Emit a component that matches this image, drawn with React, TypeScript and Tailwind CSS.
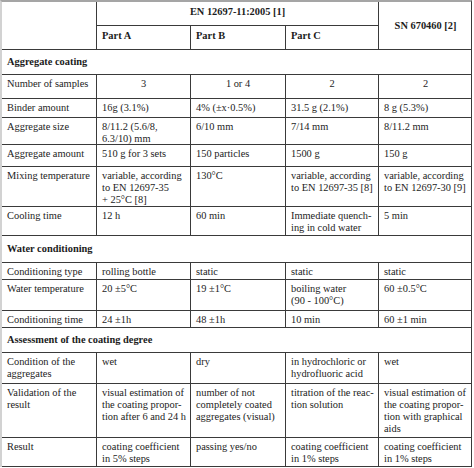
type Row = { label: string[]; cells: string[][]; center?: boolean }

const top: Row[] = [
  { label: ["Number of samples"], cells: [["3"], ["1 or 4"], ["2"], ["2"]], center: true },
  { label: ["Binder amount"], cells: [["16g (3.1%)"], ["4% (±x·0.5%)"], ["31.5 g (2.1%)"], ["8 g (5.3%)"]] },
  { label: ["Aggregate size"], cells: [["8/11.2 (5.6/8,", "6.3/10) mm"], ["6/10 mm"], ["7/14 mm"], ["8/11.2 mm"]] },
  { label: ["Aggregate amount"], cells: [["510 g for 3 sets"], ["150 particles"], ["1500 g"], ["150 g"]] },
  {
    label: ["Mixing temperature"],
    cells: [
      ["variable, according", "to EN 12697-35", "+ 25°C [8]"],
      ["130°C"],
      ["variable, according", "to EN 12697-35 [8]"],
      ["variable, according", "to EN 12697-30 [9]"],
    ],
  },
  { label: ["Cooling time"], cells: [["12 h"], ["60 min"], ["Immediate quench-", "ing in cold water"], ["5 min"]] },
]

const water: Row[] = [
  { label: ["Conditioning type"], cells: [["rolling bottle"], ["static"], ["static"], ["static"]] },
  { label: ["Water temperature"], cells: [["20 ±5°C"], ["19 ±1°C"], ["boiling water", "(90 - 100°C)"], ["60 ±0.5°C"]] },
  { label: ["Conditioning time"], cells: [["24 ±1h"], ["48 ±1h"], ["10 min"], ["60 ±1 min"]] },
]

const assess: Row[] = [
  {
    label: ["Condition of the", "aggregates"],
    cells: [["wet"], ["dry"], ["in hydrochloric or", "hydrofluoric acid"], ["wet"]],
  },
  {
    label: ["Validation of the", "result"],
    cells: [
      ["visual estimation of", "the coating propor-", "tion after 6 and 24 h"],
      ["number of not", "completely coated", "aggregates (visual)"],
      ["titration of the reac-", "tion solution"],
      ["visual estimation of", "the coating propor-", "tion with graphical", "aids"],
    ],
  },
  {
    label: ["Result"],
    cells: [
      ["coating coefficient", "in 5% steps"],
      ["passing yes/no"],
      ["coating coefficient", "in 1% steps"],
      ["coating coefficient", "in 1% steps"],
    ],
  },
]

function Lines({ lines }: { lines: string[] }) {
  return (
    <>
      {lines.map((l, i) => (
        <span key={i} className="block whitespace-nowrap">
          {l}
        </span>
      ))}
    </>
  )
}

function Section({ title }: { title: string }) {
  return (
    <div className="col-span-5 flex items-center border-b border-[#3a3a3a] px-[5px] font-bold">
      {title}
    </div>
  )
}

function Rows({ rows }: { rows: Row[] }) {
  return (
    <>
      {rows.map((r, i) => (
        <div key={i} className="contents">
          <div className="border-r border-b border-[#3a3a3a] px-[5px] pt-[3px]">
            <Lines lines={r.label} />
          </div>
          {r.cells.map((c, j) => (
            <div
              key={j}
              className={
                "border-b border-[#3a3a3a] px-[5px] pt-[3px] " +
                (j < 3 ? "border-r " : "") +
                (r.center ? "text-center" : "")
              }
            >
              <Lines lines={c} />
            </div>
          ))}
        </div>
      ))}
    </>
  )
}

export default function App() {
  return (
    <div className="h-[468px] w-[474px] bg-white font-['Liberation_Serif',serif] text-[10.4px] leading-[12px] text-[#1c1c1c]">
      <div className="grid w-[472px] grid-cols-[95px_94px_95px_93px_93px] grid-rows-[24px_24px_25px_24px_19px_27px_22px_40px_29px_27px_17px_31px_17px_25px_31px_54px_29px] border-t-2 border-r border-l-2 border-t-[#a5a5a5] border-r-[#3a3a3a] border-l-[#d2d2d2]">
        <div className="row-span-2 border-r border-b border-[#3a3a3a]" />
        <div className="col-span-3 flex items-center justify-center border-r border-b border-[#3a3a3a] pb-[3px] font-bold">
          EN 12697-11:2005 [1]
        </div>
        <div className="row-span-2 flex items-center justify-center border-b border-[#3a3a3a] font-bold">
          SN 670460 [2]
        </div>
        <div className="flex items-center border-r border-b border-[#3a3a3a] px-[5px] pb-[3px] font-bold">Part A</div>
        <div className="flex items-center border-r border-b border-[#3a3a3a] px-[5px] pb-[3px] font-bold">Part B</div>
        <div className="flex items-center border-r border-b border-[#3a3a3a] px-[5px] pb-[3px] font-bold">Part C</div>

        <Section title="Aggregate coating" />
        <Rows rows={top} />
        <Section title="Water conditioning" />
        <Rows rows={water} />
        <Section title="Assessment of the coating degree" />
        <Rows rows={assess} />
      </div>
    </div>
  )
}
